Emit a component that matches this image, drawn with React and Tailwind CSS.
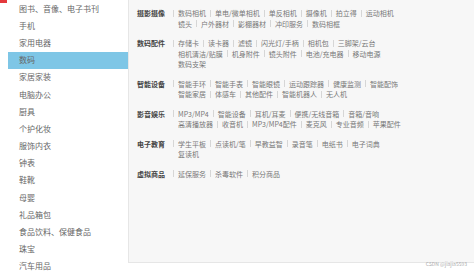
import React from 'react';

const menu = [
    '图书、音像、电子书刊', '手机', '家用电器', '数码', '家居家装', '电脑办公', '厨具', '个护化妆',
    '服饰内衣', '钟表', '鞋靴', '母婴', '礼品箱包', '食品饮料、保健食品', '珠宝', '汽车用品',
];

const groups = [
    {
        name: '摄影摄像',
        lines: [
            ['数码相机', '单电/微单相机', '单反相机', '摄像机', '拍立得', '运动相机'],
            ['镜头', '户外器材', '影棚器材', '冲印服务', '数码相框'],
        ],
    },
    {
        name: '数码配件',
        lines: [
            ['存储卡', '读卡器', '滤镜', '闪光灯/手柄', '相机包', '三脚架/云台'],
            ['相机清洁/贴膜', '机身附件', '镜头附件', '电池/充电器', '移动电源'],
            ['数码支架'],
        ],
    },
    {
        name: '智能设备',
        lines: [
            ['智能手环', '智能手表', '智能眼镜', '运动跟踪器', '健康监测', '智能配饰'],
            ['智能家居', '体感车', '其他配件', '智能机器人', '无人机'],
        ],
    },
    {
        name: '影音娱乐',
        lines: [
            ['MP3/MP4', '智能设备', '耳机/耳麦', '便携/无线音箱', '音箱/音响'],
            ['高清播放器', '收音机', 'MP3/MP4配件', '麦克风', '专业音频', '苹果配件'],
        ],
    },
    {
        name: '电子教育',
        lines: [
            ['学生平板', '点读机/笔', '早教益智', '录音笔', '电纸书', '电子词典'],
            ['复读机'],
        ],
    },
    {
        name: '虚拟商品',
        lines: [['延保服务', '杀毒软件', '积分商品']],
    },
];

const Sep = () => <span className="mx-[4px] h-[7px] w-px bg-[#d6d6d6] shrink-0" />;

const App = () => {
    return (
        <div
            className="relative flex h-[271px] w-[474px] overflow-hidden bg-white"
            style={{ fontFamily: '"Noto Sans CJK SC", "Noto Sans", sans-serif' }}
        >
            {/* red tab peeking in at the corner */}
            <div className="absolute left-0 top-0 h-[3px] w-[7px] bg-[#e4393c]" />

            {/* left menu */}
            <ul className="ml-[8px] w-[120px] shrink-0 bg-white">
                {menu.map((item) => (
                    <li
                        key={item}
                        className={`flex h-[17.2px] items-center pl-[11px] text-[8px] text-[#666] whitespace-nowrap ${
                            item === '数码' ? 'bg-[#7ec6e6] text-[#555]' : ''
                        }`}
                    >
                        {item}
                    </li>
                ))}
            </ul>

            {/* right sub menu */}
            <div className="h-[263px] flex-1 border-b border-l border-[#e6e6e6] bg-[#f7f7f7] pl-[8px] pt-[8px]">
                {groups.map((group) => (
                    <div key={group.name} className="mb-[9px] flex">
                        <span className="flex h-[10.5px] w-[32px] shrink-0 items-center text-[7px] font-bold text-[#444]">
                            {group.name}
                        </span>
                        <div className="flex flex-col">
                            {group.lines.map((line, li) => (
                                <div
                                    key={li}
                                    className={`flex h-[10.5px] items-center text-[7px] text-[#777] whitespace-nowrap ${
                                        li > 0 ? 'pl-[9px]' : ''
                                    }`}
                                >
                                    {li === 0 && <Sep />}
                                    {line.map((item, i) => (
                                        <React.Fragment key={item}>
                                            {i > 0 && <Sep />}
                                            <span>{item}</span>
                                        </React.Fragment>
                                    ))}
                                </div>
                            ))}
                        </div>
                    </div>
                ))}
            </div>

            <span className="absolute bottom-[4px] right-[7px] text-[5px] text-[#aaa]">CSDN @jiajia5593</span>
        </div>
    );
};

export default App;
